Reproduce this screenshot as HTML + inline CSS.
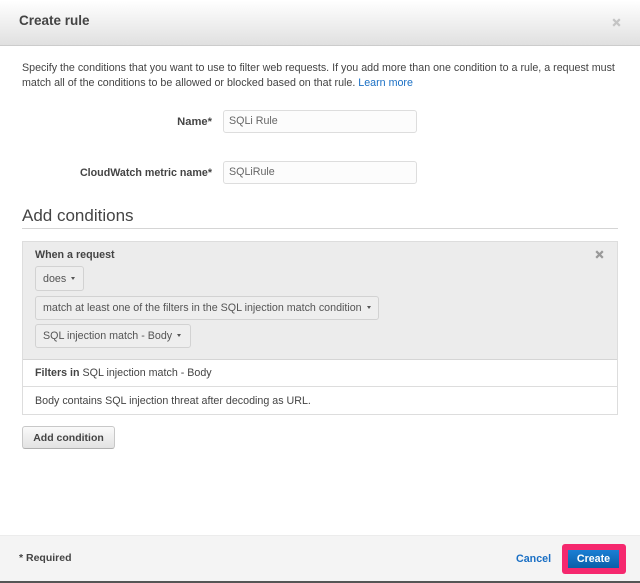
<!DOCTYPE html>
<html><head><meta charset="utf-8"><style>
html,body{margin:0;padding:0;background:#fff}
body{width:640px;height:583px;position:relative;overflow:hidden;font-family:"Liberation Sans",sans-serif;color:#444;font-size:10.7px}
#w{position:absolute;left:0;top:0;width:640px;height:583px;filter:blur(.35px)}
.a{position:absolute;box-sizing:border-box;white-space:nowrap}
.t{line-height:16px;height:16px}
b{font-weight:bold}
.inp{background:#fcfcfc;border:1px solid #ddd;border-radius:3px;left:223px;width:194px;height:23px;padding-left:5px;line-height:20px;color:#666;font-size:10.7px}
.dd{background:#eee;border:1px solid #d2d2d2;border-radius:3px;left:35px;padding-left:7px;color:#555;font-size:10.7px}
.c{display:inline-block;width:0;height:0;border-left:2.5px solid transparent;border-right:2.5px solid transparent;border-top:3px solid #555;vertical-align:2px;margin-left:5px}
</style></head><body><div id="w">
<div class="a" style="left:0;top:0;width:640px;height:46px;background:linear-gradient(#fff,#e0e0e0);border-bottom:1px solid #ccc"></div>
<div class="a t" style="left:19px;top:13px;font-size:13.5px;font-weight:bold;color:#444">Create rule</div>
<svg class="a" style="left:612px;top:18px" width="9" height="9" viewBox="0 0 9 9"><path d="M1.2 1.2L7.8 7.8M7.8 1.2L1.2 7.8" stroke="#c4c4c4" stroke-width="2.2"/></svg>
<div class="a t" style="left:22px;top:60px">Specify the conditions that you want to use to filter web requests. If you add more than one condition to a rule, a request must</div>
<div class="a t" style="left:22px;top:75px">match all of the conditions to be allowed or blocked based on that rule. <span style="color:#1a6fc4">Learn more</span></div>
<div class="a t" style="right:428px;top:114px;font-weight:bold;font-size:11.2px">Name*</div>
<div class="a inp" style="top:110px">SQLi Rule</div>
<div class="a t" style="right:428px;top:165px;font-weight:bold">CloudWatch metric name*</div>
<div class="a inp" style="top:161px">SQLiRule</div>
<div class="a" style="left:22px;top:206px;font-size:17px;line-height:20px;color:#444">Add conditions</div>
<div class="a" style="left:22px;top:228px;width:596px;height:1px;background:#d5d5d5"></div>
<div class="a" style="left:22px;top:241px;width:596px;height:174px;border:1px solid #ddd;background:#fff"></div>
<div class="a" style="left:23px;top:242px;width:594px;height:118px;background:#ececec;border-bottom:1px solid #d5d5d5"></div>
<div class="a t" style="left:35px;top:247px;font-weight:bold">When a request</div>
<svg class="a" style="left:594.500px;top:250px" width="9" height="9" viewBox="0 0 9 9"><path d="M1.2 1.2L7.8 7.8M7.8 1.2L1.2 7.8" stroke="#999" stroke-width="2.2"/></svg>
<div class="a dd" style="top:266px;width:49px;height:25px;line-height:24px">does<span class="c"></span></div>
<div class="a dd" style="top:296px;width:344px;height:24px;line-height:23px">match at least one of the filters in the SQL injection match condition<span class="c"></span></div>
<div class="a dd" style="top:324px;width:156px;height:24px;line-height:23px">SQL injection match - Body<span class="c"></span></div>
<div class="a t" style="left:35px;top:365px"><b>Filters in</b> SQL injection match - Body</div>
<div class="a" style="left:23px;top:386px;width:594px;height:1px;background:#ddd"></div>
<div class="a t" style="left:35px;top:393px">Body contains SQL injection threat after decoding as URL.</div>
<div class="a" style="left:22px;top:426px;width:93px;height:23px;border:1px solid #c8c8c8;border-bottom-color:#b0b0b0;border-radius:3px;background:linear-gradient(#fafafa,#e2e2e2);text-align:center;line-height:22px;font-weight:bold;color:#444;font-size:10.5px">Add condition</div>
<div class="a" style="left:0;top:535px;width:640px;height:46px;background:#f4f4f4;border-top:1px solid #ececec"></div>
<div class="a" style="left:0;top:581px;width:640px;height:2px;background:#555"></div>
<div class="a t" style="left:19px;top:550px;font-weight:bold;font-size:10.5px">* Required</div>
<div class="a t" style="left:516px;top:551px;font-weight:bold;color:#1a6fc4">Cancel</div>
<div class="a" style="left:562px;top:544px;width:64px;height:30px;background:#f5286e;border-radius:3px"></div>
<div class="a" style="left:568px;top:550px;width:51px;height:18px;background:linear-gradient(#1a7fd4,#0a5fa8);color:#fff;font-weight:bold;text-align:center;line-height:18px">Create</div>
</div></body></html>
